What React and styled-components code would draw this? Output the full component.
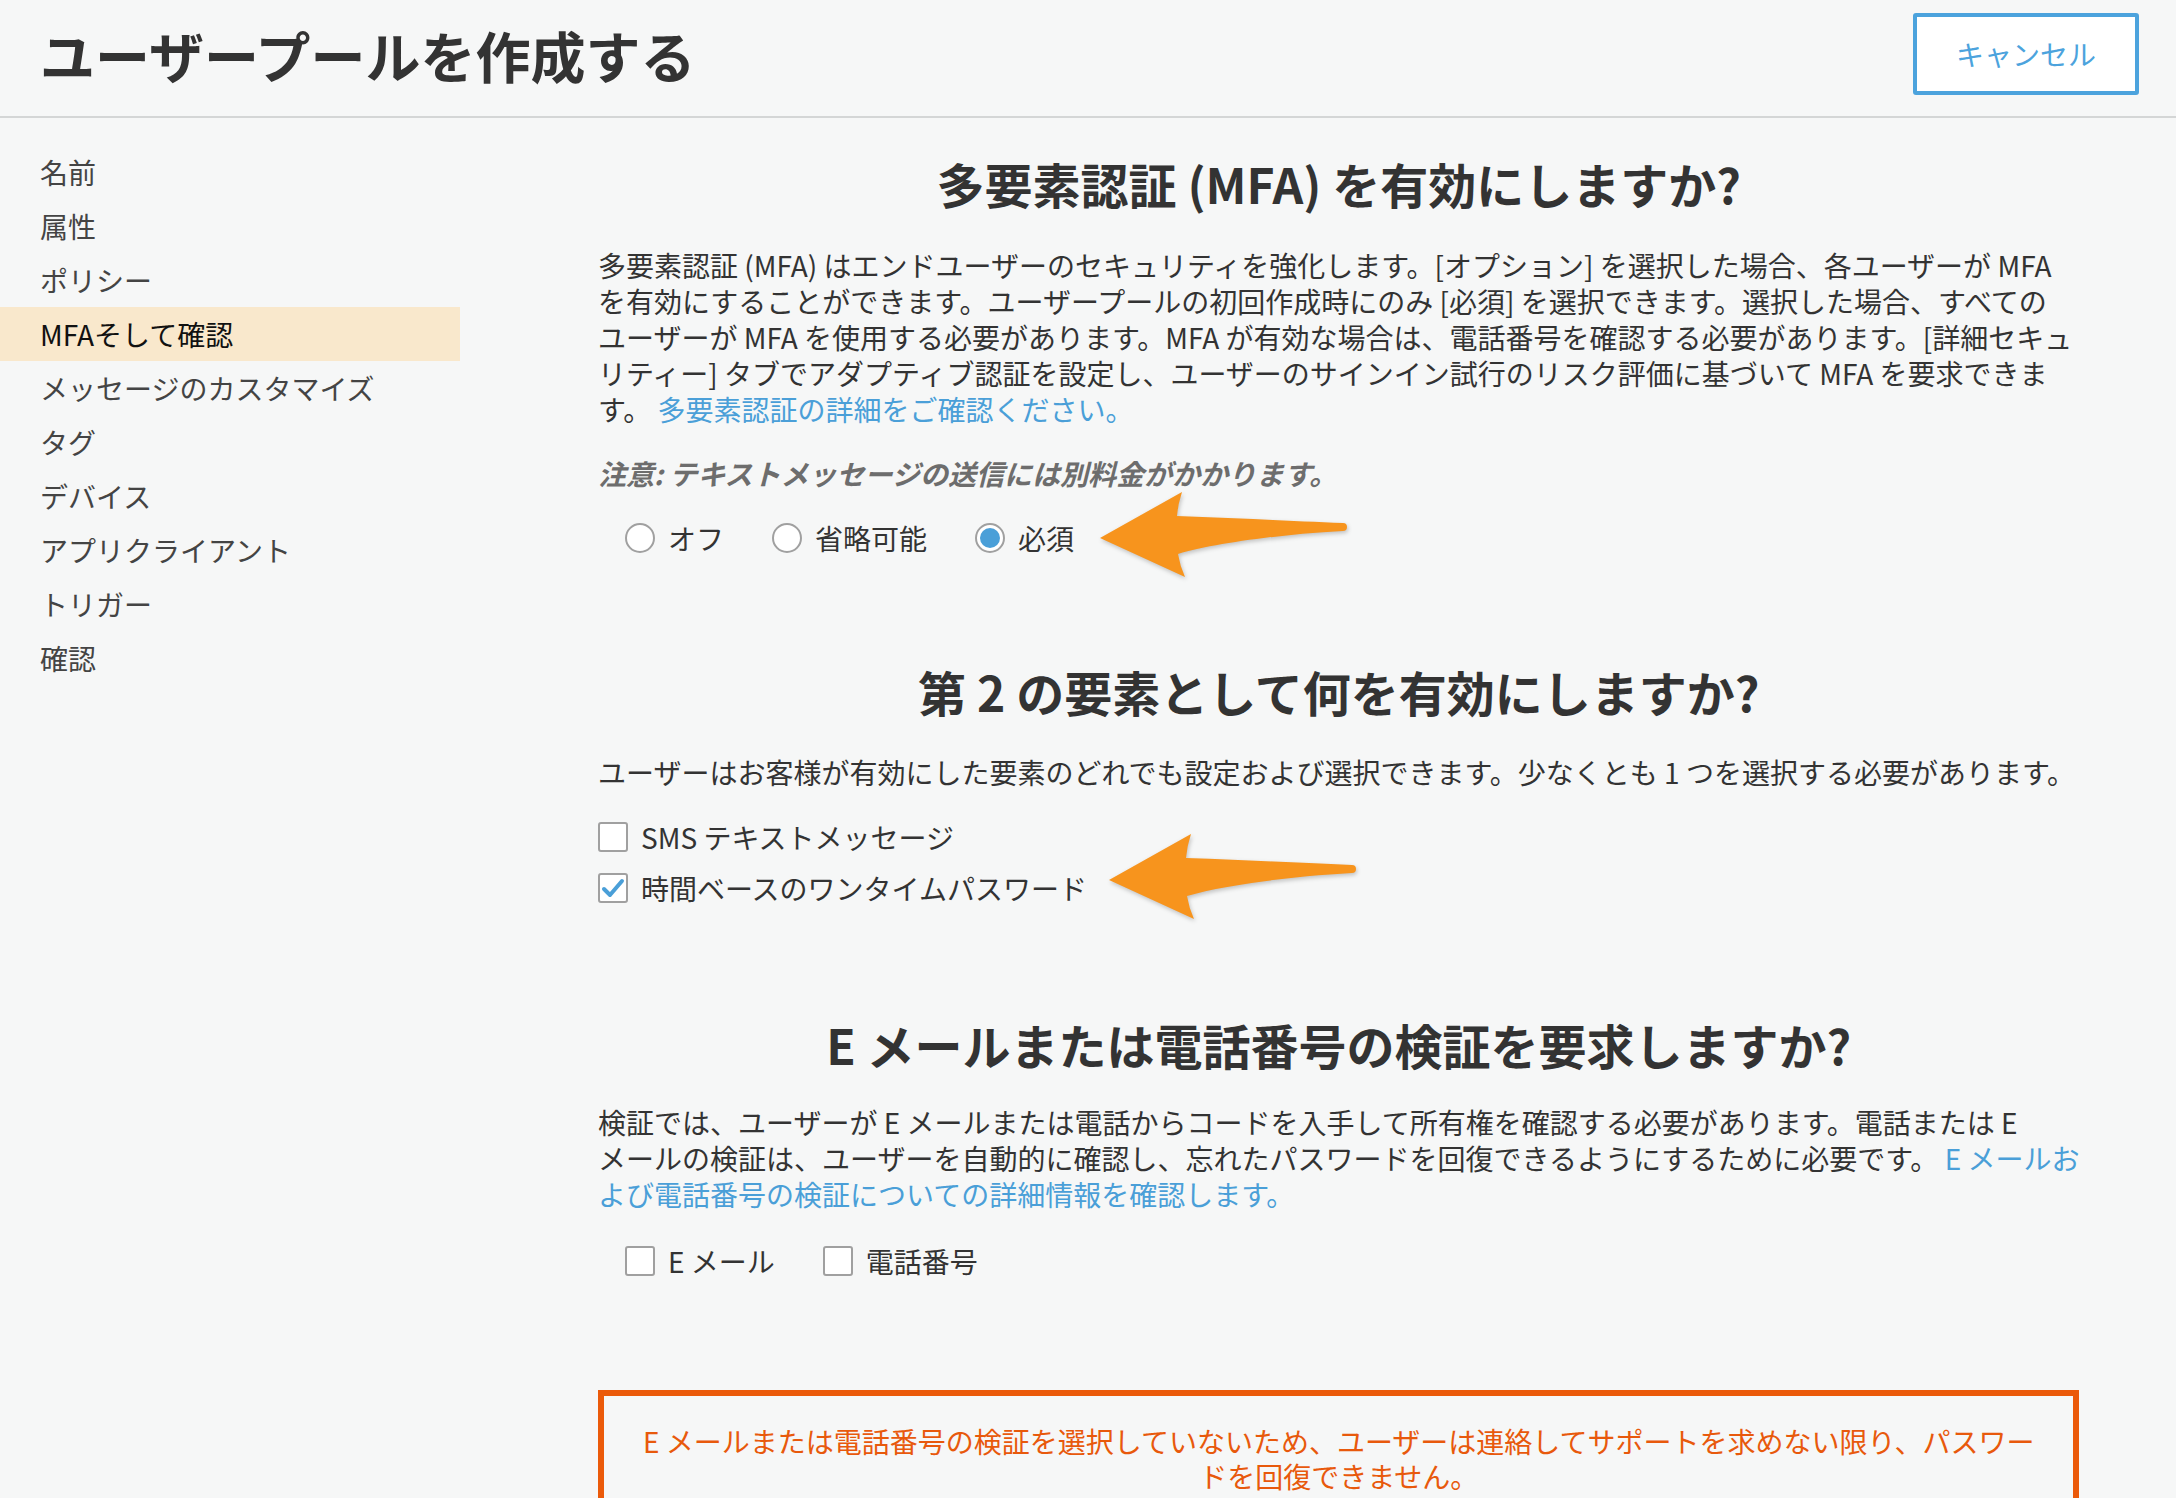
import styled, { createGlobalStyle } from 'styled-components';

const GlobalStyle = createGlobalStyle`
  * { box-sizing: border-box; }
  body {
    margin: 0;
    background: #f6f7f7;
    font-family: "Noto Sans CJK JP", "Noto Sans", sans-serif;
    color: #333;
  }
`;

const steps = [
  '名前',
  '属性',
  'ポリシー',
  'MFAそして確認',
  'メッセージのカスタマイズ',
  'タグ',
  'デバイス',
  'アプリクライアント',
  'トリガー',
  '確認',
];

const mfaLines = [
  '多要素認証 (MFA) はエンドユーザーのセキュリティを強化します。[オプション] を選択した場合、各ユーザーが MFA',
  'を有効にすることができます。ユーザープールの初回作成時にのみ [必須] を選択できます。選択した場合、すべての',
  'ユーザーが MFA を使用する必要があります。MFA が有効な場合は、電話番号を確認する必要があります。[詳細セキュ',
  'リティー] タブでアダプティブ認証を設定し、ユーザーのサインイン試行のリスク評価に基づいて MFA を要求できま',
];

const Header = styled.header`
  display: flex;
  align-items: center;
  justify-content: space-between;
  height: 118px;
  padding: 0 37px 8px 40px;
  border-bottom: 2px solid #d4d6d6;
`;

const Title = styled.h1`
  margin: 0;
  font-size: 55px;
  line-height: 1;
  font-weight: 700;
  color: #333;
`;

const CancelButton = styled.button`
  width: 226px;
  height: 82px;
  background: #fff;
  border: 4px solid #4ca3dd;
  border-radius: 3px;
  color: #4ca3dd;
  font-family: inherit;
  font-size: 28px;
  cursor: pointer;
`;

const Body = styled.div`
  display: flex;
`;

const Sidebar = styled.nav`
  width: 460px;
  flex-shrink: 0;
  padding-top: 27px;
`;

const NavItem = styled.div`
  display: flex;
  align-items: center;
  height: 54px;
  padding-left: 40px;
  font-size: 28px;
  color: ${p => (p.$active ? '#111' : '#444')};
  background: ${p => (p.$active ? '#f9e8cc' : 'transparent')};
`;

const Main = styled.main`
  flex: 1;
  padding: 35px 98px 0 138px;
`;

const Section = styled.section`
  margin-top: ${p => p.$gap || 0}px;
`;

const Heading = styled.h2`
  margin: 0;
  text-align: center;
  font-size: 48px;
  line-height: 60px;
  font-weight: 700;
  color: #333;
`;

const Para = styled.p`
  margin: ${p => p.$gap || 32}px 0 0;
  font-size: 28px;
  line-height: 36px;
  color: #333;
  white-space: nowrap;
`;

const Link = styled.a`
  color: #4a9fd8;
  text-decoration: none;
`;

const Note = styled.p`
  margin: 28px 0 0;
  font-size: 28px;
  line-height: 36px;
  font-weight: 700;
  font-style: italic;
  color: #6d6d6d;
`;

const OptionRow = styled.div`
  position: relative;
  display: flex;
  align-items: center;
  gap: 48px;
  height: 36px;
  margin-top: ${p => p.$gap || 29}px;
  padding-left: 27px;
`;

const Option = styled.label`
  display: flex;
  align-items: center;
  gap: 13px;
  font-size: 28px;
  line-height: 36px;
  color: #333;
`;

const Radio = styled.span`
  position: relative;
  width: 30px;
  height: 30px;
  border: 2px solid #a0a0a0;
  border-radius: 50%;
  background: #fff;

  &::after {
    content: '';
    display: ${p => (p.$checked ? 'block' : 'none')};
    position: absolute;
    inset: 3px;
    border-radius: 50%;
    background: #4a9fd8;
  }
`;

const CheckList = styled.div`
  position: relative;
  display: flex;
  flex-direction: column;
  gap: 15px;
  margin-top: 29px;
`;

const Box = styled.span`
  display: flex;
  align-items: center;
  justify-content: center;
  width: 30px;
  height: 30px;
  border: 2px solid #a0a0a0;
  border-radius: 3px;
  background: #fff;
`;

const Warning = styled.div`
  margin-top: 111px;
  padding: 28px 16px;
  border: 6px solid #eb5a0a;
  text-align: center;
  font-size: 28px;
  line-height: 35px;
  color: #e8590c;
  white-space: nowrap;
`;

const ArrowSvg = styled.svg`
  position: absolute;
  left: ${p => p.$left}px;
  top: ${p => p.$top}px;
  filter: drop-shadow(1px 2px 2px rgba(0, 0, 0, 0.22));
  pointer-events: none;
`;

function Arrow({ left, top }) {
  return (
    <ArrowSvg $left={left} $top={top} width="262" height="100" viewBox="0 0 262 100">
      <path
        d="M5 53 L87 7 Q83 19 82 31 C140 33 200 36 248 38 A4 4 0 0 1 248 46 C190 49 120 58 83 69 Q85 81 90 92 Z"
        fill="#f7941d"
      />
    </ArrowSvg>
  );
}

function Check({ checked }) {
  return (
    <Box>
      {checked && (
        <svg width="24" height="24" viewBox="0 0 24 24">
          <path d="M3 13 L9 19 L21 5" fill="none" stroke="#4a9fd8" strokeWidth="4" strokeLinecap="round" strokeLinejoin="round" />
        </svg>
      )}
    </Box>
  );
}

export default function App() {
  return (
    <>
      <GlobalStyle />
      <Header>
        <Title>ユーザープールを作成する</Title>
        <CancelButton>キャンセル</CancelButton>
      </Header>
      <Body>
        <Sidebar>
          {steps.map(s => (
            <NavItem key={s} $active={s === 'MFAそして確認'}>{s}</NavItem>
          ))}
        </Sidebar>

        <Main>
          <Section>
            <Heading>多要素認証 (MFA) を有効にしますか?</Heading>
            <Para $gap={34}>
              {mfaLines.map(line => (
                <span key={line}>{line}<br /></span>
              ))}
              す。 <Link href="#">多要素認証の詳細をご確認ください。</Link>
            </Para>
            <Note>注意: テキストメッセージの送信には別料金がかかります。</Note>
            <OptionRow>
              <Option><Radio />オフ</Option>
              <Option><Radio />省略可能</Option>
              <Option><Radio $checked />必須</Option>
              <Arrow left={497} top={-35} />
            </OptionRow>
          </Section>

          <Section $gap={105}>
            <Heading>第 2 の要素として何を有効にしますか?</Heading>
            <Para $gap={33}>
              ユーザーはお客様が有効にした要素のどれでも設定および選択できます。少なくとも 1 つを選択する必要があります。
            </Para>
            <CheckList>
              <Option><Check />SMS テキストメッセージ</Option>
              <Option><Check checked />時間ベースのワンタイムパスワード</Option>
              <Arrow left={506} top={8} />
            </CheckList>
          </Section>

          <Section $gap={108}>
            <Heading>E メールまたは電話番号の検証を要求しますか?</Heading>
            <Para $gap={30}>
              検証では、ユーザーが E メールまたは電話からコードを入手して所有権を確認する必要があります。電話または E
              <br />
              メールの検証は、ユーザーを自動的に確認し、忘れたパスワードを回復できるようにするために必要です。{' '}
              <Link href="#">E メールお<br />よび電話番号の検証についての詳細情報を確認します。</Link>
            </Para>
            <OptionRow $gap={31}>
              <Option><Check />E メール</Option>
              <Option><Check />電話番号</Option>
            </OptionRow>
          </Section>

          <Warning>
            E メールまたは電話番号の検証を選択していないため、ユーザーは連絡してサポートを求めない限り、パスワー
            <br />
            ドを回復できません。
          </Warning>
        </Main>
      </Body>
    </>
  );
}
